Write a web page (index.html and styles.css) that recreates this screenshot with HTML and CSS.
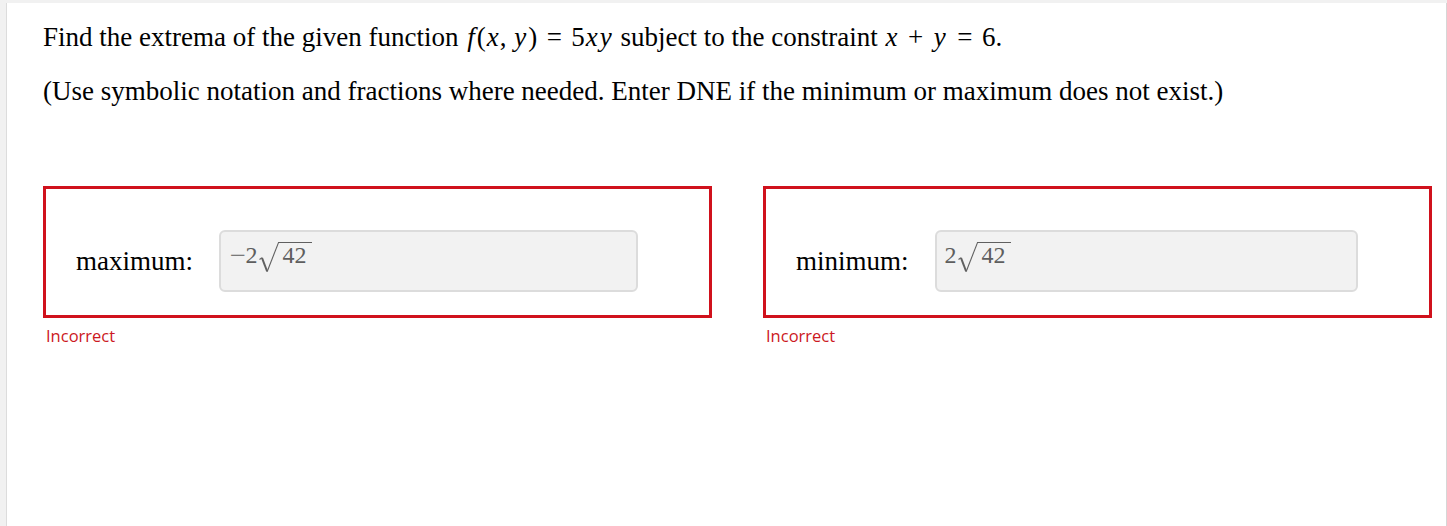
FILE: index.html
```html
<!DOCTYPE html>
<html lang="en">
<head>
<meta charset="utf-8">
<title>Extrema</title>
<link rel="stylesheet" href="styles.css">
</head>
<body>
<div class="panel">
  <div class="question">
    <p class="q-line">Find the extrema of the given function <span class="m"><i class="fv">f</i>(<i>x</i>, <i class="yv">y</i>)</span><span class="op">=</span><span class="m">5<i>x</i><i class="yv">y</i></span> subject to the constraint <span class="m"><i>x</i></span><span class="op">+</span><span class="m"><i class="yv">y</i></span><span class="op">=</span>6.</p>
    <p class="q-line">(Use symbolic notation and fractions where needed. Enter DNE if the minimum or maximum does not exist.)</p>
  </div>
  <div class="answers">
    <div class="answer">
      <div class="box">
        <span class="label">maximum:</span>
        <div class="input"><span class="ans"><span class="minus">&minus;</span>2<svg class="rad" width="20" height="31" viewBox="0 0 20 31"><path d="M0.5 17.5 L3 15.8" stroke="#606060" stroke-width="1.2" fill="none"/><path d="M3 15.8 L8.2 29.5" stroke="#606060" stroke-width="2" fill="none"/><path d="M8.2 29.5 L19.5 0.6" stroke="#606060" stroke-width="1.1" fill="none"/></svg><span class="radicand">42</span></span></div>
      </div>
      <div class="feedback">Incorrect</div>
    </div>
    <div class="answer">
      <div class="box">
        <span class="label">minimum:</span>
        <div class="input"><span class="ans">2<svg class="rad" width="20" height="31" viewBox="0 0 20 31"><path d="M0.5 17.5 L3 15.8" stroke="#606060" stroke-width="1.2" fill="none"/><path d="M3 15.8 L8.2 29.5" stroke="#606060" stroke-width="2" fill="none"/><path d="M8.2 29.5 L19.5 0.6" stroke="#606060" stroke-width="1.1" fill="none"/></svg><span class="radicand">42</span></span></div>
      </div>
      <div class="feedback">Incorrect</div>
    </div>
  </div>
</div>
</body>
</html>
```
FILE: styles.css
```css
html, body {
  margin: 0;
  padding: 0;
}
body {
  background: #f1f1f1;
  font-family: "Liberation Serif", "Times New Roman", serif;
  color: #000;
}
.panel {
  margin: 3px 1px 0 7px;
  min-height: 523px;
  background: #fff;
  box-shadow: -1px 0 0 #dcdcdc, 1px 0 0 #d6d6d6;
  padding: 0 14px 0 36px;
}
.question {
  padding-top: 19px;
  font-size: 27px;
}
.q-line {
  margin: 0 0 24px;
  line-height: 30px;
  white-space: nowrap;
}
.q-line i {
  font-style: italic;
  padding: 0 1px;
}
.q-line .fv {
  padding: 0 2px 0 2px;
}
.q-line .yv {
  padding-right: 2px;
}
.op {
  padding: 0 9.5px;
}
.answers {
  margin-top: 80px;
  display: grid;
  grid-template-columns: 669px 669px;
  column-gap: 51px;
}
.box {
  border: 3px solid #d0111c;
  height: 132px;
  box-sizing: border-box;
  padding: 41px 71px 23px 30px;
  display: flex;
  align-items: center;
}
.label {
  font-size: 27px;
  line-height: 30px;
  margin-right: 26px;
  white-space: nowrap;
}
.input {
  flex: 1;
  height: 62px;
  box-sizing: border-box;
  border: 2px solid #dcdcdc;
  border-radius: 6px;
  background: #f2f2f2;
  padding: 9px 8px 0;
}
.ans {
  font-size: 24px;
  line-height: 28px;
  color: #5e5e5e;
  white-space: nowrap;
}
.minus {
  display: inline-block;
  padding: 0 1px 0 2px;
  transform: scaleX(1.2);
}
.rad {
  vertical-align: -10px;
  margin-left: 1px;
}
.radicand {
  display: inline-block;
  line-height: 22px;
  border-top: 1px solid #606060;
  padding: 1px 5px 0 5px;
  margin-left: -1px;
}
.feedback {
  font-family: "Open Sans", "Liberation Sans", sans-serif;
  font-size: 16.5px;
  line-height: 20px;
  color: #cc1822;
  margin-top: 8px;
  padding-left: 3px;
}
```
